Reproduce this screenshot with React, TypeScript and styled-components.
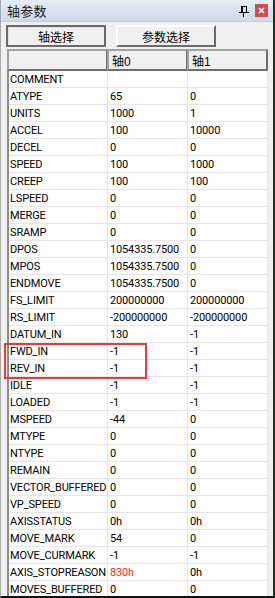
import { Fragment } from "react";
import styled, { createGlobalStyle } from "styled-components";

const GlobalStyle = createGlobalStyle`
  html, body {
    margin: 0;
    padding: 0;
    background: #ffffff;
  }
  body {
    font-family: "Liberation Sans", "Noto Sans CJK SC", sans-serif;
  }
`;

type Row = { name: string; a: string; b: string; alert?: boolean };

const rows: Row[] = [
  { name: "COMMENT", a: "", b: "" },
  { name: "ATYPE", a: "65", b: "0" },
  { name: "UNITS", a: "1000", b: "1" },
  { name: "ACCEL", a: "100", b: "10000" },
  { name: "DECEL", a: "0", b: "0" },
  { name: "SPEED", a: "100", b: "1000" },
  { name: "CREEP", a: "100", b: "100" },
  { name: "LSPEED", a: "0", b: "0" },
  { name: "MERGE", a: "0", b: "0" },
  { name: "SRAMP", a: "0", b: "0" },
  { name: "DPOS", a: "1054335.7500", b: "0" },
  { name: "MPOS", a: "1054335.7500", b: "0" },
  { name: "ENDMOVE", a: "1054335.7500", b: "0" },
  { name: "FS_LIMIT", a: "200000000", b: "200000000" },
  { name: "RS_LIMIT", a: "-200000000", b: "-200000000" },
  { name: "DATUM_IN", a: "130", b: "-1" },
  { name: "FWD_IN", a: "-1", b: "-1" },
  { name: "REV_IN", a: "-1", b: "-1" },
  { name: "IDLE", a: "-1", b: "-1" },
  { name: "LOADED", a: "-1", b: "-1" },
  { name: "MSPEED", a: "-44", b: "0" },
  { name: "MTYPE", a: "0", b: "0" },
  { name: "NTYPE", a: "0", b: "0" },
  { name: "REMAIN", a: "0", b: "0" },
  { name: "VECTOR_BUFFERED", a: "0", b: "0" },
  { name: "VP_SPEED", a: "0", b: "0" },
  { name: "AXISSTATUS", a: "0h", b: "0h" },
  { name: "MOVE_MARK", a: "54", b: "0" },
  { name: "MOVE_CURMARK", a: "-1", b: "-1" },
  { name: "AXIS_STOPREASON", a: "830h", b: "0h", alert: true },
  { name: "MOVES_BUFFERED", a: "0", b: "0" },
];

const COLS = "99px 80px 80px";

const Window = styled.div`
  position: relative;
  width: 275px;
  height: 598px;
  box-sizing: border-box;
  overflow: hidden;
  background: #f0f0f0;
  border-left: 1px solid #a9a9a9;
  border-right: 2px solid #1d2d25;
  border-bottom: 2px solid #111111;
  display: flex;
  flex-direction: column;
`;

const TitleBar = styled.div`
  height: 22px;
  flex-shrink: 0;
  box-sizing: border-box;
  display: flex;
  align-items: center;
  padding: 0 5px 0 6px;
  background: linear-gradient(#e6edf5, #cfdbe8);
  border-bottom: 1px solid #c4ccd6;
`;

const Title = styled.span`
  flex: 1;
  font-size: 13px;
  color: #1a1a1a;
  letter-spacing: 0.3px;
`;

const CloseBox = styled.div`
  width: 13px;
  height: 13px;
  margin-left: 6px;
  background: #c75050;
  display: flex;
  align-items: center;
  justify-content: center;
`;

const Body = styled.div`
  flex: 1;
  display: flex;
  flex-direction: column;
  padding: 3px 0 0 5px;
`;

const ButtonRow = styled.div`
  display: flex;
  gap: 10px;
  height: 22px;
  margin-bottom: 2px;
`;

const ToolButton = styled.div<{ $pressed?: boolean }>`
  width: 100px;
  box-sizing: border-box;
  display: flex;
  align-items: center;
  justify-content: center;
  font-size: 12px;
  color: #000;
  background: #f0f0f0;
  border: 2px solid;
  border-color: ${({ $pressed }) =>
    $pressed ? "#6a6a6a" : "#ffffff #6a6a6a #6a6a6a #ffffff"};
  ${({ $pressed }) => ($pressed ? "box-shadow: inset 1px 1px #e0e0e0;" : "")}
`;

const Grid = styled.div`
  margin-left: 1px;
  width: 261px;
  display: grid;
  grid-template-columns: ${COLS};
  grid-template-rows: 22px;
  grid-auto-rows: 17px;
  background: #ffffff;
  border-left: 2px solid #8c8c8c;
  box-sizing: border-box;
`;

const HeadRow = styled.div`
  grid-column: 1 / -1;
  display: grid;
  grid-template-columns: ${COLS};
  height: 22px;
`;

const HeadCell = styled.div`
  height: 22px;
  box-sizing: border-box;
  background: #f0f0f0;
  border: 2px solid;
  border-color: #a0a0a0 #6f6f6f #6f6f6f #a0a0a0;
  margin-left: -1px;
  display: flex;
  align-items: center;
  padding-left: 3px;
  font-size: 12px;
  color: #000;
  &:first-child {
    margin-left: -2px;
  }
`;

const Cell = styled.div<{ $alert?: boolean; $name?: boolean }>`
  box-sizing: border-box;
  border-right: 1px solid #e6e6e6;
  border-bottom: 1px solid #e6e6e6;
  padding-left: ${({ $name }) => ($name ? "1px" : "2px")};
  display: flex;
  align-items: center;
  font-family: Roboto, "Liberation Sans", sans-serif;
  font-size: 11px;
  letter-spacing: -0.15px;
  white-space: nowrap;
  overflow: hidden;
  color: ${({ $alert }) => ($alert ? "#ff1f1f" : "#000")};
`;

const Highlight = styled.div`
  position: absolute;
  left: 3px;
  top: 343px;
  width: 143px;
  height: 36px;
  box-sizing: border-box;
  border: 2px solid #ea3a3e;
  pointer-events: none;
`;

const PinIcon = () => (
  <svg width="10" height="12" viewBox="0 0 10 12">
    <rect x="2" y="1" width="2" height="6" fill="#000" />
    <rect x="2" y="1" width="6" height="1" fill="#000" />
    <rect x="7" y="1" width="1" height="6" fill="#000" />
    <rect x="0" y="7" width="10" height="1" fill="#000" />
    <rect x="4" y="8" width="1" height="4" fill="#000" />
  </svg>
);

const CloseIcon = () => (
  <svg width="7" height="7" viewBox="0 0 7 7">
    <path d="M1 1 L6 6 M6 1 L1 6" stroke="#fff" strokeWidth="1.6" />
  </svg>
);

const App = () => {
  return (
    <>
      <GlobalStyle />
      <Window>
        <TitleBar>
          <Title>轴参数</Title>
          <PinIcon />
          <CloseBox>
            <CloseIcon />
          </CloseBox>
        </TitleBar>
        <Body>
          <ButtonRow>
            <ToolButton $pressed>轴选择</ToolButton>
            <ToolButton>参数选择</ToolButton>
          </ButtonRow>
          <Grid>
            <HeadRow>
              <HeadCell />
              <HeadCell>轴0</HeadCell>
              <HeadCell>轴1</HeadCell>
            </HeadRow>
            {rows.map((r) => (
              <Fragment key={r.name}>
                <Cell $name>{r.name}</Cell>
                <Cell $alert={r.alert}>{r.a}</Cell>
                <Cell>{r.b}</Cell>
              </Fragment>
            ))}
          </Grid>
        </Body>
        <Highlight />
      </Window>
    </>
  );
};

export default App;
